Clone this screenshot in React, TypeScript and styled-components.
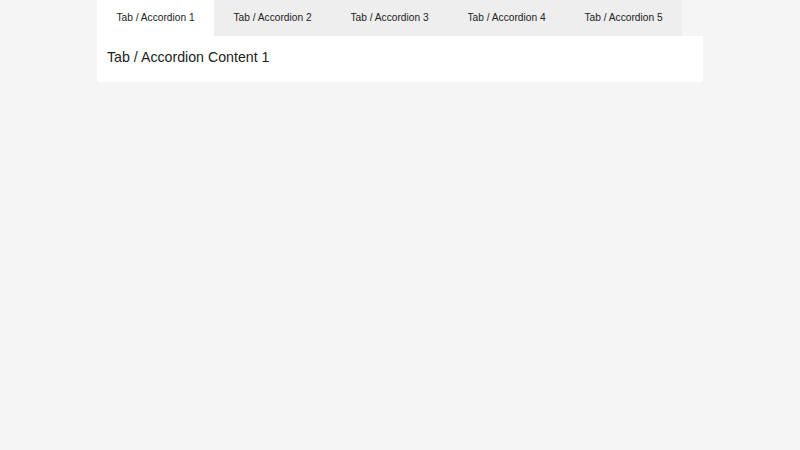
import { useState } from 'react'
import styled, { createGlobalStyle } from 'styled-components'

const tabs = [1, 2, 3, 4, 5]

export default function App() {
  const [active, setActive] = useState(1)
  return (
    <>
      <GlobalStyle />
      <Wrapper>
        <TabList>
          {tabs.map(n => (
            <Tab key={n} $active={n === active} onClick={() => setActive(n)}>
              Tab / Accordion {n}
            </Tab>
          ))}
        </TabList>
        <Panel>
          <PanelText>Tab / Accordion Content {active}</PanelText>
        </Panel>
      </Wrapper>
    </>
  )
}

const GlobalStyle = createGlobalStyle`
  html, body {
    margin: 0;
    background: #f5f5f5;
    font-family: "Liberation Sans", Arial, sans-serif;
    color: #222;
  }
`

const Wrapper = styled.div`
  width: 606px;
  margin: 0 auto;
`

const TabList = styled.div`
  display: flex;
`

const Tab = styled.button<{ $active: boolean }>`
  width: 117px;
  height: 36px;
  border: 0;
  padding: 0 0 1px;
  margin: 0;
  font-family: inherit;
  font-size: 10.2px;
  color: #222;
  cursor: pointer;
  background: ${p => (p.$active ? '#ffffff' : '#eeeeee')};
`

const Panel = styled.div`
  background: #ffffff;
  padding: 13px 10px 0;
  height: 33px;
`

const PanelText = styled.div`
  font-size: 14.2px;
  line-height: 17px;
  color: #222;
`
